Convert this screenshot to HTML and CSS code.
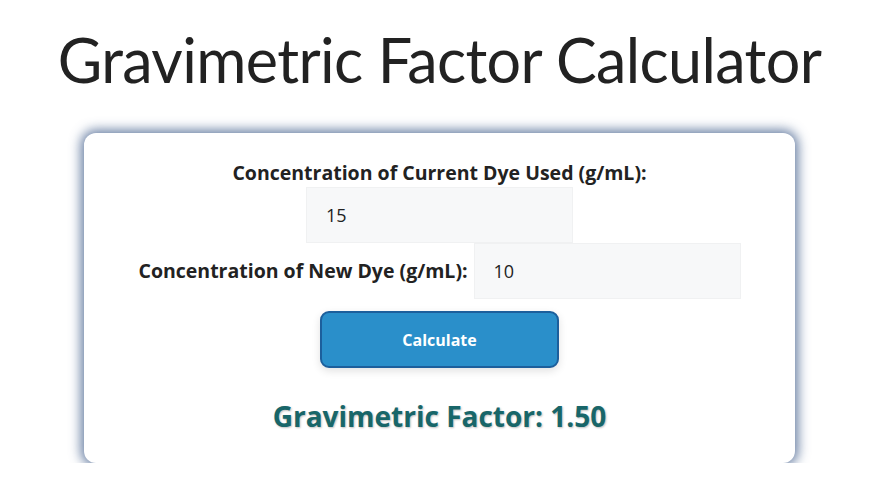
FILE: index.html
```html
<!doctype html>
<html lang="en">
<head>
<title>Gravimetric Factor Calculator</title>
<meta name="viewport" content="width=device-width, initial-scale=1.0">
<link rel="stylesheet" href="styles.css">
</head>
<body>

<h1>Gravimetric Factor Calculator</h1>

<main class="card">
	<div class="field">
		<label for="current">Concentration of Current Dye Used (g/mL):</label>
		<input id="current" type="number" value="15">
	</div>
	<div class="field">
		<label for="new">Concentration of New Dye (g/mL):</label>
		<input id="new" type="number" value="10">
	</div>
	<button type="button" class="calc">Calculate</button>
	<p class="result">Gravimetric Factor: 1.50</p>
</main>

</body>
</html>
```

FILE: styles.css
```css
body {
	margin: 0;
	padding: 20px 100px 0 84px;
	font-family: "Open Sans", "Noto Sans", sans-serif;
	color: #222;
	background: white;
}
h1 {
	text-align: center;
	font-family: Lato, "Open Sans", sans-serif;
	font-weight: 400;
	font-size: 61px;
	letter-spacing: -0.6px;
	line-height: 80px;
	margin: 0 -60px 33px;
	white-space: nowrap;
}
.card {
	display: block;
	background: white;
	border-radius: 12px;
	box-shadow: 0 0 12px 3px rgba(50, 80, 130, 0.75);
	padding: 26px 20px 28px;
	text-align: center;
}
.field {
	display: flex;
	flex-wrap: wrap;
	justify-content: center;
	align-items: center;
	column-gap: 6px;
}
.field label {
	font-weight: 700;
	font-size: 19.5px;
	line-height: 28px;
}
.field input {
	width: 267px;
	height: 56px;
	box-sizing: border-box;
	border: 1px solid #f0f1f2;
	background: #f7f8f9;
	font: 18px "Open Sans", sans-serif;
	color: #222;
	padding: 0 19px;
	-moz-appearance: textfield;
}
.field input::-webkit-inner-spin-button {
	-webkit-appearance: none;
}
.calc {
	display: block;
	margin: 12px auto 0;
	width: 239px;
	height: 57px;
	background: #2a8fca;
	border: 2px solid #1c5f9c;
	border-radius: 9px;
	color: white;
	font: 700 16px "Open Sans", sans-serif;
	box-shadow: 0 3px 8px rgba(0, 0, 0, 0.12);
}
.result {
	margin: 29px 0 0;
	font-size: 28px;
	line-height: 38px;
	font-weight: 700;
	color: #186669;
	text-shadow: 1px 1px 2px rgba(0, 0, 0, 0.25);
}
```
